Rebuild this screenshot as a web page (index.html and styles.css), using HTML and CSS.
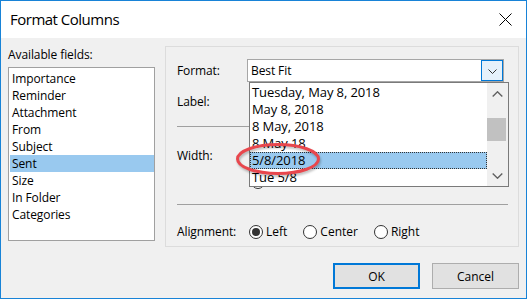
FILE: index.html
```html
<!DOCTYPE html>
<html>
<head>
<meta charset="utf-8">
<link rel="stylesheet" href="styles.css">
</head>
<body>
<div class="window">
  <div class="titlebar">
    <span class="title">Format Columns</span>
    <svg class="close" width="13" height="13" viewBox="0 0 13 13"><path d="M0.5 0.5 L12.5 12.5 M12.5 0.5 L0.5 12.5" stroke="#000" stroke-width="1" fill="none"/></svg>
  </div>
  <div class="main">
    <div class="top">
      <div class="fields">
        <div class="fields-label">Available fields:</div>
        <div class="listbox">
          <div class="item">Importance</div>
          <div class="item">Reminder</div>
          <div class="item">Attachment</div>
          <div class="item">From</div>
          <div class="item">Subject</div>
          <div class="item selected">Sent</div>
          <div class="item">Size</div>
          <div class="item">In Folder</div>
          <div class="item">Categories</div>
        </div>
      </div>
      <div class="group">
        <div class="row row-format">
          <span class="lbl">Format:</span>
          <div class="combo">
            <span class="combo-text">Best Fit</span>
            <span class="combo-btn"><svg width="9" height="5" viewBox="0 0 9 5"><path d="M0.5 0.5 L4.5 4.5 L8.5 0.5" stroke="#333" stroke-width="1" fill="none"/></svg></span>
            <div class="dropdown">
              <div class="dd-items">
                <div class="dd-item">Tuesday, May 8, 2018</div>
                <div class="dd-item">May 8, 2018</div>
                <div class="dd-item">8 May, 2018</div>
                <div class="dd-item">8 May 18</div>
                <div class="dd-item dd-selected">5/8/2018</div>
                <div class="dd-item">Tue 5/8</div>
              </div>
              <div class="scrollbar">
                <svg class="arrow" width="11" height="6" viewBox="0 0 11 6"><path d="M0.7 5.5 L5.5 0.8 L10.3 5.5" stroke="#606060" stroke-width="1.4" fill="none"/></svg>
                <div class="track"><div class="thumb"></div></div>
                <svg class="arrow" width="11" height="6" viewBox="0 0 11 6"><path d="M0.7 0.5 L5.5 5.2 L10.3 0.5" stroke="#606060" stroke-width="1.4" fill="none"/></svg>
              </div>
            </div>
          </div>
        </div>
        <div class="row row-label">
          <span class="lbl">Label:</span>
        </div>
        <div class="sep sep1"></div>
        <div class="row row-width">
          <span class="lbl">Width:</span>
        </div>
        <div class="row row-hidden">
          <span class="radio hidden-radio"></span>
        </div>
        <div class="sep sep2"></div>
        <div class="row row-align">
          <span class="lbl lbl-align">Alignment:</span>
          <span class="opt"><span class="radio checked"></span>Left</span>
          <span class="opt"><span class="radio"></span>Center</span>
          <span class="opt"><span class="radio"></span>Right</span>
        </div>
        <svg class="mark" width="90" height="38" viewBox="0 0 90 38"><ellipse cx="43" cy="17" rx="40.5" ry="14.5" stroke="#e8474d" stroke-width="3" fill="none"/></svg>
      </div>
    </div>
    <div class="buttons">
      <button class="btn btn-ok">OK</button>
      <button class="btn">Cancel</button>
    </div>
  </div>
</div>
</body>
</html>
```
FILE: styles.css
```css
* { box-sizing: border-box; }
html, body { margin: 0; padding: 0; }
body {
  font-family: "Open Sans", "Noto Sans", sans-serif;
  font-size: 12px;
  color: #000;
  background: #f0f0f0;
}
.window {
  width: 527px;
  height: 299px;
  border: 1px solid #1883d7;
  display: flex;
  flex-direction: column;
  background: #f0f0f0;
}
.titlebar {
  height: 37px;
  background: #fff;
  display: flex;
  align-items: center;
  justify-content: space-between;
  padding: 0 14px 0 9px;
}
.title {
  font-size: 15px;
  letter-spacing: -0.5px;
  margin-top: -2px;
}
.close { margin-top: -1px; }
.main {
  flex: 1;
  padding: 8px 7px 0 7px;
  display: flex;
  flex-direction: column;
}
.top {
  display: flex;
  gap: 10px;
}
.fields {
  width: 147px;
  padding-top: 1px;
}
.fields-label {
  height: 16px;
  line-height: 16px;
  margin-bottom: 4px;
  letter-spacing: -0.1px;
}
.listbox {
  height: 174px;
  background: #fff;
  border: 1px solid #a0a0a0;
  padding: 2px 0 0 1px;
}
.item {
  height: 17px;
  line-height: 17px;
  padding-left: 2px;
  letter-spacing: -0.1px;
}
.item.selected { background: #99c9ef; }
.group {
  position: relative;
  width: 354px;
  height: 201px;
  border: 1px solid #dcdcdc;
  padding: 12px 10px 0 11px;
}
.row {
  display: flex;
  align-items: center;
  height: 23px;
}
.lbl { width: 70px; letter-spacing: -0.1px; }
.row-label { margin-top: 8px; }
.sep {
  height: 1px;
  background: #a0a0a0;
}
.sep1 { margin-top: 13px; }
.row-width { margin-top: 17px; }
.row-hidden { margin-top: 8px; height: 13px; padding-left: 74px; }
.sep2 { margin-top: 16px; }
.row-align { margin-top: 15px; }
.lbl-align { width: 72px; }
.combo {
  position: relative;
  width: 257px;
  height: 23px;
  background: #fff;
  border: 1px solid #a6a6a6;
  display: flex;
  align-items: center;
  justify-content: space-between;
  padding-left: 3px;
}
.combo-text { letter-spacing: -0.1px; }
.combo-btn {
  width: 22px;
  height: 21px;
  border: 1px solid #0078d7;
  background: #e5f1fb;
  display: flex;
  align-items: center;
  justify-content: center;
  padding-top: 1px;
}
.dropdown {
  position: absolute;
  left: 1px;
  top: 22px;
  width: 260px;
  height: 105px;
  background: #fff;
  border: 1px solid #7a7a7a;
  display: flex;
  z-index: 2;
}
.dd-items {
  width: 237px;
  padding-top: 1px;
}
.dd-item {
  height: 17px;
  line-height: 17px;
  padding-left: 2px;
  white-space: nowrap;
  font-size: 13px;
  letter-spacing: -0.1px;
}
.dd-selected {
  background: #99c9ef;
  border: 1px dotted #333;
  line-height: 15px;
  padding-left: 1px;
}
.scrollbar {
  width: 21px;
  background: #f0f0f0;
  display: flex;
  flex-direction: column;
  align-items: center;
  padding: 8px 0 7px;
}
.track {
  flex: 1;
  width: 100%;
  padding-top: 21px;
}
.thumb {
  width: 19px;
  height: 23px;
  background: #c1c1c1;
}
.arrow { display: block; }
.opt {
  display: flex;
  align-items: center;
  margin-right: 16px;
}
.radio {
  width: 14px;
  height: 14px;
  border: 1px solid #333;
  border-radius: 50%;
  background: #fff;
  display: inline-flex;
  align-items: center;
  justify-content: center;
  margin-right: 3px;
}
.radio.checked::after {
  content: "";
  width: 8px;
  height: 8px;
  border-radius: 50%;
  background: #333;
}
.mark {
  position: absolute;
  left: 69px;
  top: 95px;
  z-index: 3;
  filter: drop-shadow(1px 2px 1px rgba(0,0,0,0.25));
}
.buttons {
  display: flex;
  justify-content: flex-end;
  gap: 12px;
  margin-top: 16px;
}
.btn {
  width: 87px;
  height: 26px;
  background: #e1e1e1;
  border: 1px solid #adadad;
  font-family: inherit;
  font-size: 12px;
  color: #000;
  padding: 0;
}
.btn-ok { border: 2px solid #0078d7; }
```
